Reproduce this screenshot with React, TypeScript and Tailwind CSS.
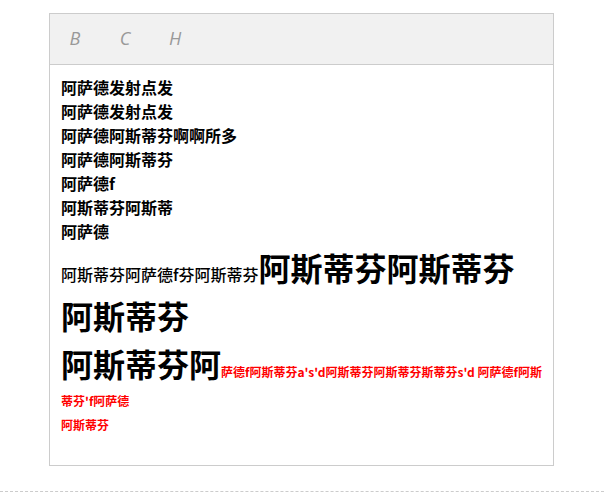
import React from 'react';

const cjk = '"Noto Sans CJK SC", "Microsoft YaHei", sans-serif';

export default function App() {
  const lines = [
    '阿萨德发射点发',
    '阿萨德发射点发',
    '阿萨德阿斯蒂芬啊啊所多',
    '阿萨德阿斯蒂芬',
    '阿萨德f',
    '阿斯蒂芬阿斯蒂',
    '阿萨德',
  ];

  return (
    <div className="w-full bg-white min-h-[494px]">
      <div className="w-[505px] ml-[49px] pt-[13px]">
        <div className="border border-[#cccccc]">
          {/* toolbar */}
          <div className="h-[51px] bg-[#f1f1f1] border-b border-[#cccccc] flex items-center">
            {['B', 'C', 'H'].map((l) => (
              <button
                key={l}
                className="w-[50px] h-full flex items-center justify-center italic text-[18px] text-[#999999] pb-[2px]"
                style={{ fontFamily: '"Open Sans", "Noto Sans", sans-serif' }}
              >
                {l}
              </button>
            ))}
          </div>

          {/* editable area */}
          <div
            className="h-[400px] pt-[10px] px-[11px] text-black text-[16px] leading-[1.5]"
            style={{ fontFamily: cjk }}
          >
            {lines.map((t, i) => (
              <p key={i} className="font-bold">
                {t}
              </p>
            ))}
            <p className="whitespace-nowrap">
              <span className="font-medium">阿斯蒂芬阿萨德f芬阿斯蒂芬</span>
              <span className="text-[32px] font-bold">阿斯蒂芬阿斯蒂芬</span>
              <br />
              <span className="text-[32px] font-bold">阿斯蒂芬</span>
              <br />
              <span className="text-[32px] font-bold">阿斯蒂芬阿</span>
              <span className="text-[12px] font-bold text-[#ff0000]">
                萨德f阿斯蒂芬a's'd阿斯蒂芬阿斯蒂芬斯蒂芬s'd 阿萨德f阿斯
              </span>
              <br />
              <span className="text-[12px] font-bold text-[#ff0000]">蒂芬'f阿萨德</span>
            </p>
            <p>
              <span className="text-[12px] font-bold text-[#ff0000]">阿斯蒂芬</span>
            </p>
          </div>
        </div>
      </div>
      <div className="mt-[25px] border-t border-dashed border-[#cccccc]" />
    </div>
  );
}
